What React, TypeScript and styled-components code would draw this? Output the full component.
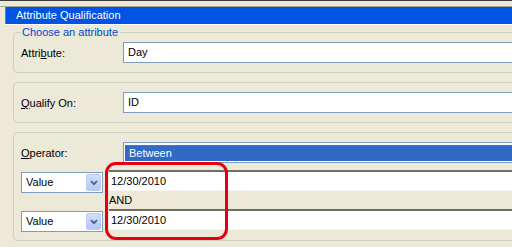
import React from "react";
import styled, { createGlobalStyle } from "styled-components";

const Global = createGlobalStyle`
  html, body {
    margin: 0;
    padding: 0;
    background: #ece9d8;
  }
  body {
    font-family: "Liberation Sans", Arial, sans-serif;
    font-size: 11px;
    color: #000;
  }
`;

const App = () => {
  return (
    <Page>
      <Global />
      <TopStrip />
      <TitleBar>Attribute Qualification</TitleBar>
      <TitleShine />
      <Body>
        <GroupBox>
          <Legend>Choose an attribute</Legend>
          <FieldRow>
            <Label>
              Attri<u>b</u>ute:
            </Label>
            <TextField>Day</TextField>
          </FieldRow>
        </GroupBox>

        <GroupBox>
          <FieldRow>
            <Label>
              <u>Q</u>ualify On:
            </Label>
            <TextField>ID</TextField>
          </FieldRow>
        </GroupBox>

        <GroupBox $bottomPad={10}>
          <FieldRow>
            <Label>
              <u>O</u>perator:
            </Label>
            <SelectField>
              <Selected>Between</Selected>
            </SelectField>
          </FieldRow>
          <ValueRow $top={7}>
            <Combo>
              <ComboText>Value</ComboText>
              <ComboButton>
                <Chevron />
              </ComboButton>
            </Combo>
            <DateField>12/30/2010</DateField>
          </ValueRow>
          <AndLabel>AND</AndLabel>
          <ValueRow $top={0}>
            <Combo>
              <ComboText>Value</ComboText>
              <ComboButton>
                <Chevron />
              </ComboButton>
            </Combo>
            <DateField>12/30/2010</DateField>
          </ValueRow>
        </GroupBox>
      </Body>
      <RedMark />
    </Page>
  );
};

export default App;

const Chevron = () => (
  <svg width="8" height="6" viewBox="0 0 8 6">
    <path d="M1 1.2 L4 4.2 L7 1.2" fill="none" stroke="#4d6185" strokeWidth="1.8" />
  </svg>
);

const Page = styled.div`
  position: relative;
  width: 512px;
  height: 247px;
  overflow: hidden;
`;

const TopStrip = styled.div`
  height: 5px;
  border-top: 1px solid #3c3c3c;
  border-bottom: 1px solid #aca899;
`;

const TitleBar = styled.div`
  margin-left: 5px;
  width: 560px;
  height: 17px;
  line-height: 17px;
  padding-left: 10px;
  background: #0054e3;
  border-left: 1px solid #6b7fa6;
  color: #fff;
  font-size: 11px;
  white-space: nowrap;
`;

const TitleShine = styled.div`
  height: 1px;
  background: #fff;
  margin-left: 5px;
`;

const Body = styled.div`
  padding: 7px 0 0 13px;
  display: flex;
  flex-direction: column;
  gap: 9px;
`;

const GroupBox = styled.div<{ $bottomPad?: number }>`
  position: relative;
  width: 560px;
  padding: 9px 7px ${(p) => p.$bottomPad ?? 9}px 7px;
  border: 1px solid #d0d0bf;
  border-radius: 4px;
  display: flex;
  flex-direction: column;
`;

const Legend = styled.span`
  position: absolute;
  top: -7px;
  left: 6px;
  padding: 0 2px;
  line-height: 13px;
  background: #ece9d8;
  color: #0046d5;
  font-size: 11px;
`;

const FieldRow = styled.div`
  display: flex;
  align-items: center;
  height: 21px;
`;

const Label = styled.div`
  width: 102px;
  flex: none;
  margin-top: 1px;
`;

const TextField = styled.div`
  flex: 1;
  height: 19px;
  line-height: 19px;
  padding-left: 4px;
  background: #fff;
  border: 1px solid #7f9db9;
`;

const SelectField = styled.div`
  flex: 1;
  padding: 2px 0 1px 1px;
  box-sizing: border-box;
  background: #fff;
  border: 1px solid #7f9db9;
  height: 21px;
  display: flex;
`;

const Selected = styled.div`
  flex: 1;
  background: #316ac5;
  color: #fff;
  padding-left: 4px;
  line-height: 15px;
  border-top: 1px solid #4b74bf;
`;

const ValueRow = styled.div<{ $top: number }>`
  display: flex;
  align-items: flex-start;
  margin-top: ${(p) => p.$top}px;
  height: 21px;
`;

const Combo = styled.div`
  width: 78px;
  height: 17px;
  margin-top: 2px;
  flex: none;
  display: flex;
  align-items: stretch;
  background: #fff;
  border: 1px solid #7f9db9;
  padding: 1px;
`;

const ComboText = styled.div`
  flex: 1;
  padding-left: 3px;
  line-height: 17px;
`;

const ComboButton = styled.div`
  width: 15px;
  display: flex;
  align-items: center;
  justify-content: center;
  background: linear-gradient(#d2dffc, #b4c8f6);
  border: 1px solid #b9cbf3;
  border-radius: 2px;
  box-sizing: border-box;
`;

const DateField = styled.div`
  flex: 1;
  margin-left: 6px;
  height: 18px;
  line-height: 19px;
  padding-left: 2px;
  background: #fff;
  border-top: 2px solid #716f64;
  border-bottom: 1px solid #f7f6f1;
`;

const AndLabel = styled.div`
  height: 18px;
  line-height: 18px;
  padding-left: 88px;
`;

const RedMark = styled.div`
  position: absolute;
  left: 105px;
  top: 162px;
  width: 117px;
  height: 72px;
  border: 3px solid #e40010;
  border-radius: 11px;
`;
